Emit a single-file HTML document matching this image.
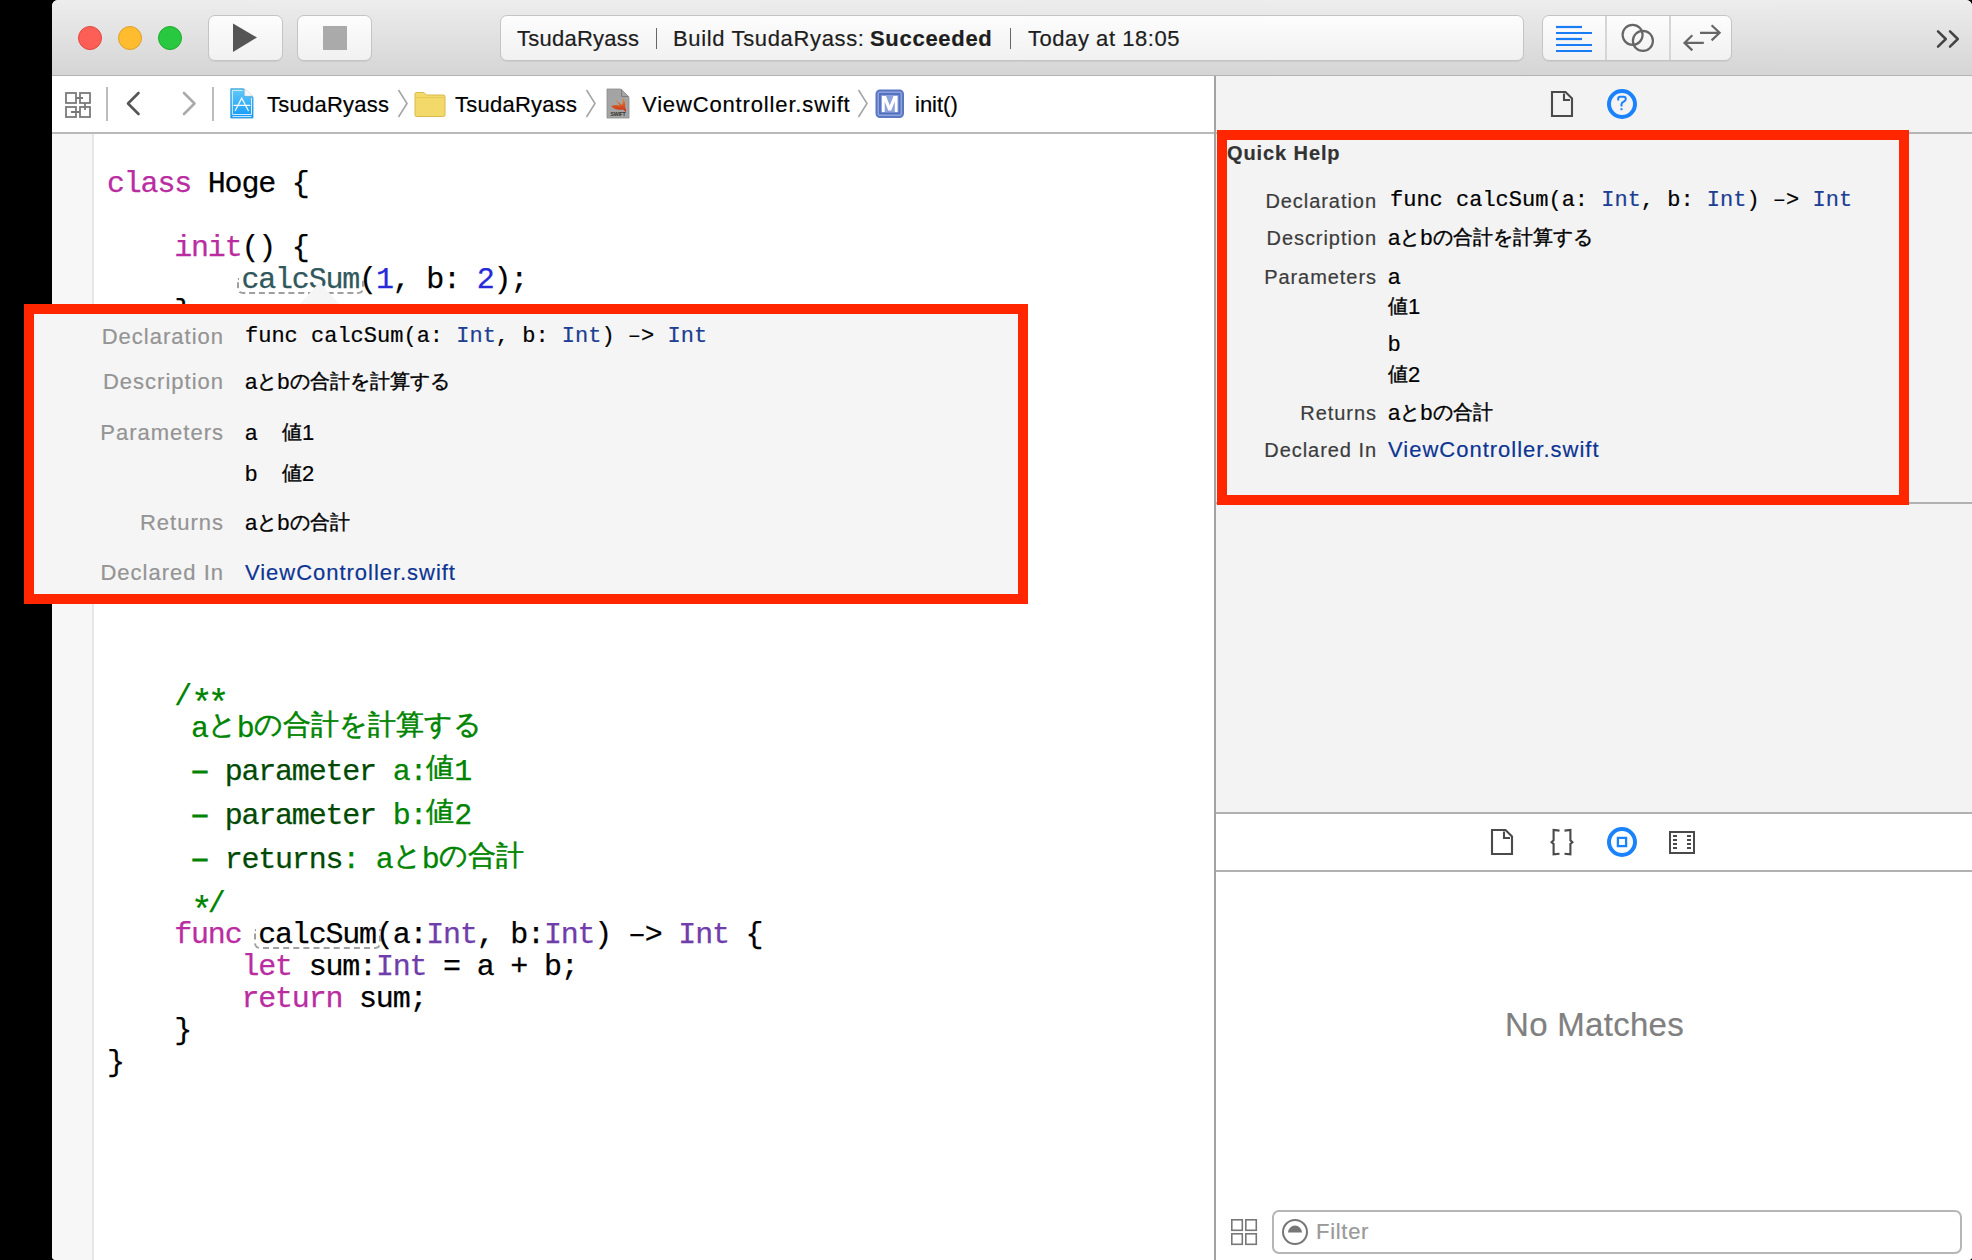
<!DOCTYPE html>
<html><head><meta charset="utf-8">
<style>
html,body{margin:0;padding:0;}
body{width:1972px;height:1260px;background:#000;position:relative;overflow:hidden;font-family:"Liberation Sans",sans-serif;}
.a{position:absolute;}
.t{position:absolute;white-space:pre;line-height:1;-webkit-text-stroke:0.2px currentColor;}
.m{font-family:"Liberation Mono",monospace;-webkit-text-stroke:0.2px currentColor;}
#win{left:52px;top:0;width:1920px;height:1260px;border-radius:6px 6px 4px 4px;overflow:hidden;background:#fff;}
#c{left:-52px;top:0;width:1972px;height:1260px;}
#title{left:52px;top:0;width:1920px;height:75px;background:linear-gradient(#ededed,#d5d5d5);border-bottom:1px solid #b3b3b3;}
.btn{background:linear-gradient(#fdfdfd,#f1f1f1);border:1px solid #c4c4c4;border-radius:7px;box-shadow:0 1px 0 rgba(0,0,0,0.06);box-sizing:border-box;}
.light{width:24px;height:24px;border-radius:50%;box-sizing:border-box;top:26px;}
#nav{left:52px;top:76px;width:1162px;height:56px;background:#fff;border-bottom:2px solid #b9b9b9;}
#gutter{left:52px;top:134px;width:40px;height:1126px;background:#f7f7f7;border-right:2px solid #e6e6e6;}
#divider{left:1214px;top:76px;width:2px;height:1184px;background:#a3a3a3;}
#insp{left:1216px;top:76px;width:756px;height:1184px;background:#f3f3f3;}
.code{font-family:"Liberation Mono",monospace;font-size:30px;letter-spacing:-1.2px;color:#000;-webkit-text-stroke:0.25px currentColor;}
.kw{color:#ba2da2;}
.num{color:#272ad8;}
.cm{color:#008400;}
.cmk{color:#024a04;}
.ty{color:#703daa;}
.pf{color:#31595d;}
.lbl{font-size:22px;color:#949494;}
.val{font-size:22px;color:#000;}
.link{color:#0d3593;}
.dt{color:#1c3f93;}
.ast{font-size:36px;letter-spacing:-4.8px;position:relative;top:10px;line-height:0;}
.jc{font-size:28px;letter-spacing:0;-webkit-text-stroke:0.5px currentColor;position:relative;top:-3px;}
.jp{font-size:20px;letter-spacing:0;-webkit-text-stroke:0.4px currentColor;position:relative;top:-1px;}
</style></head>
<body>
<div id="win" class="a"><div id="c" class="a">
  <div id="title" class="a"></div>
  <!-- traffic lights -->
  <div class="a light" style="left:78px;background:#fd5f57;border:1px solid #e1473f;"></div>
  <div class="a light" style="left:118px;background:#febc2e;border:1px solid #dea02a;"></div>
  <div class="a light" style="left:158px;background:#28c840;border:1px solid #1dac2c;"></div>
  <!-- play / stop -->
  <div class="a btn" style="left:208px;top:15px;width:75px;height:46px;"></div>
  <svg class="a" style="left:233px;top:23px" width="25" height="30"><polygon points="0,0.5 24,14.5 0,29" fill="#555"/></svg>
  <div class="a btn" style="left:297px;top:15px;width:75px;height:46px;"></div>
  <div class="a" style="left:323px;top:26px;width:24px;height:24px;background:#aaa;"></div>
  <!-- status -->
  <div class="a btn" style="left:500px;top:15px;width:1024px;height:46px;"></div>

  <!-- segmented -->
  <div class="a btn" style="left:1542px;top:15px;width:190px;height:46px;"></div>

  <!-- nav bar -->
  <div id="nav" class="a"></div>
  <div id="gutter" class="a"></div>
  <div id="divider" class="a"></div>
  <div id="insp" class="a"></div>

  <!-- code -->
  <div class="t code" style="left:107px;top:169px"><span class="kw">class</span> Hoge {</div>
  <div class="t code" style="left:107px;top:233px">    <span class="kw">init</span>() {</div>
  <div class="t code" style="left:107px;top:265px">        <span class="pf">calcSum</span>(<span class="num">1</span>, b: <span class="num">2</span>);</div>
  <div class="t code" style="left:107px;top:297px">    }</div>
  <div class="t code cm" style="left:107px;top:682px">    /<span class="ast">**</span></div>
  <div class="t code cm" style="left:107px;top:714px">     a<span class="jc">と</span>b<span class="jc">の合計を計算する</span></div>
  <div class="t code cm" style="left:107px;top:757px">     <span style="display:inline-block;transform:scaleX(0.8) translateY(-0.5px);-webkit-text-stroke:0.8px currentColor">—</span> <span class="cmk">parameter</span> a:<span class="jc">値</span>1</div>
  <div class="t code cm" style="left:107px;top:801px">     <span style="display:inline-block;transform:scaleX(0.8) translateY(-0.5px);-webkit-text-stroke:0.8px currentColor">—</span> <span class="cmk">parameter</span> b:<span class="jc">値</span>2</div>
  <div class="t code cm" style="left:107px;top:845px">     <span style="display:inline-block;transform:scaleX(0.8) translateY(-0.5px);-webkit-text-stroke:0.8px currentColor">—</span> <span class="cmk">returns</span>: a<span class="jc">と</span>b<span class="jc">の合計</span></div>
  <div class="t code cm" style="left:107px;top:889px">     <span class="ast">*</span>/</div>
  <div class="t code" style="left:107px;top:920px">    <span class="kw">func</span> calcSum(a:<span class="ty">Int</span>, b:<span class="ty">Int</span>) –&gt; <span class="ty">Int</span> {</div>
  <div class="t code" style="left:107px;top:952px">        <span class="kw">let</span> sum:<span class="ty">Int</span> = a + b;</div>
  <div class="t code" style="left:107px;top:984px">        <span class="kw">return</span> sum;</div>
  <div class="t code" style="left:107px;top:1016px">    }</div>
  <div class="t code" style="left:107px;top:1048px">}</div>

  <!-- toolbar status text -->
  <div class="t" style="left:517px;top:28px;font-size:22px;color:#1e1e1e;letter-spacing:0.25px">TsudaRyass</div>
  <div class="a" style="left:656px;top:28px;width:1px;height:21px;background:#666"></div>
  <div class="t" style="left:673px;top:28px;font-size:22px;color:#1e1e1e;letter-spacing:0.65px">Build TsudaRyass:</div>
  <div class="t" style="left:870px;top:28px;font-size:22px;color:#1e1e1e;font-weight:bold;letter-spacing:0.7px">Succeeded</div>
  <div class="a" style="left:1010px;top:28px;width:1px;height:21px;background:#666"></div>
  <div class="t" style="left:1028px;top:28px;font-size:22px;color:#1e1e1e;letter-spacing:0.55px">Today at 18:05</div>
  <!-- segmented icons -->
  <div class="a" style="left:1605px;top:16px;width:2px;height:44px;background:#d6d6d6"></div>
  <div class="a" style="left:1669px;top:16px;width:2px;height:44px;background:#d6d6d6"></div>
  <svg class="a" style="left:1540px;top:10px" width="200" height="50">
    <g stroke="#1a7cf6" stroke-width="2.2">
      <line x1="16" y1="17" x2="42" y2="17"/><line x1="16" y1="23" x2="52" y2="23"/><line x1="16" y1="29" x2="42" y2="29"/><line x1="16" y1="35" x2="52" y2="35"/><line x1="16" y1="41" x2="52" y2="41"/>
    </g>
    <g stroke="#666" stroke-width="2.2" fill="none">
      <circle cx="92.6" cy="24.8" r="10"/><circle cx="102.9" cy="30.9" r="10"/>
      <path d="M160 22.8 H179.6 M171.6 15.3 L179.6 22.8 L171.6 30.4"/>
      <path d="M163.8 32.9 H144.5 M152.3 25.3 L144.5 32.9 L152.3 40.4"/>
    </g>
  </svg>
  <svg class="a" style="left:1935px;top:28px" width="28" height="22"><path d="M3 3.3 L10.8 11 L3 18.7 M15 3.3 L22.8 11 L15 18.7" stroke="#444" stroke-width="2.5" fill="none" stroke-linecap="round" stroke-linejoin="round"/></svg>

  <!-- nav bar -->
  <svg class="a" style="left:64px;top:91px" width="28" height="28">
    <g stroke="#7a7a7a" stroke-width="1.8" fill="none">
      <rect x="2" y="2" width="10" height="10"/><rect x="16" y="2" width="10" height="10"/>
      <rect x="2" y="16" width="10" height="10"/><rect x="16" y="16" width="10" height="10"/>
      <path d="M12 7 H19 M21 12 V19 M7 21 H16"/>
    </g>
  </svg>
  <div class="a" style="left:106px;top:87px;width:2px;height:34px;background:#bdbdbd"></div>
  <svg class="a" style="left:122px;top:90px" width="80" height="28">
    <path d="M16.5 3 L6 13.5 L16.5 24" stroke="#555" stroke-width="2.6" fill="none" stroke-linecap="round" stroke-linejoin="round"/>
    <path d="M62 3 L72.5 13.5 L62 24" stroke="#aaa" stroke-width="2.6" fill="none" stroke-linecap="round" stroke-linejoin="round"/>
  </svg>
  <div class="a" style="left:212px;top:87px;width:2px;height:34px;background:#bdbdbd"></div>
  <!-- project icon -->
  <svg class="a" style="left:229px;top:87px" width="26" height="34">
    <defs><linearGradient id="pg" x1="0" y1="0" x2="0" y2="1"><stop offset="0" stop-color="#62c9f6"/><stop offset="1" stop-color="#139af9"/></linearGradient></defs>
    <path d="M1.8 1.8 H14 Q15.7 1.8 15.7 3.5 V9 H22 Q24 9 24 11 V31 H1.8 Z" fill="url(#pg)" stroke="#2a93d6" stroke-width="0.8"/>
    <path d="M15.7 1.8 L24 9 H15.7 Z" fill="#f7f9fb" stroke="#c9d3da" stroke-width="0.6"/>
    <path d="M3.4 27.5 V3.4 H13.5 M22.5 11 V27.5 H3.4 M3.4 29.6 H22.5" fill="none" stroke="#e6f5fe" stroke-width="0.9"/>
    <g stroke="#f2faff" stroke-width="1.3" fill="none" stroke-linecap="round"><path d="M6.3 23.5 L12.7 11.2 L19.3 23.5 M5.1 18.4 H20.8"/></g>
  </svg>
  <div class="t" style="left:267px;top:94px;font-size:22px;color:#000;letter-spacing:0.25px">TsudaRyass</div>
  <svg class="a" style="left:396px;top:89px" width="14" height="30"><path d="M2.5 1 L11 14.5 L2.5 28" stroke="#a5a5a5" stroke-width="1.6" fill="none"/></svg>
  <!-- folder -->
  <svg class="a" style="left:414px;top:91px" width="33" height="27">
    <path d="M1 3 Q1 1.5 2.5 1.5 H10 L12.5 4 H29.5 Q31 4 31 5.5 V24 Q31 25.5 29.5 25.5 H2.5 Q1 25.5 1 24 Z" fill="#f3d86a" stroke="#d8b94c" stroke-width="1"/>
    <path d="M1 6.5 H31" stroke="#e8c955" stroke-width="1"/>
  </svg>
  <div class="t" style="left:455px;top:94px;font-size:22px;color:#000;letter-spacing:0.25px">TsudaRyass</div>
  <svg class="a" style="left:584px;top:89px" width="14" height="30"><path d="M2.5 1 L11 14.5 L2.5 28" stroke="#a5a5a5" stroke-width="1.6" fill="none"/></svg>
  <!-- swift icon -->
  <svg class="a" style="left:605px;top:87px" width="26" height="34">
    <defs><linearGradient id="sg" x1="0" y1="0" x2="0" y2="1"><stop offset="0" stop-color="#e8902c"/><stop offset="1" stop-color="#c92a1c"/></linearGradient></defs>
    <path d="M2 2 H14.5 Q16 2 16.5 2.5 L23.5 9.5 Q24 10 24 11.5 V31 H2 Z" fill="#a4a4a4" stroke="#8a8a8a" stroke-width="0.8"/>
    <path d="M16.5 2.5 V9.5 H23.5" fill="none" stroke="#777" stroke-width="0.9"/>
    <path d="M6 19 Q11 24 18 22.5 Q20 24 21 25 Q21.5 22 20 20 Q21 15 17.5 10.5 Q18.5 15 17 18 Q13.5 15.5 9.5 12 Q13 16 15 18.5 Q11 17.5 6 19 Z" fill="url(#sg)"/>
    <text x="13" y="29.2" font-size="5.2" font-weight="bold" font-family="Liberation Sans" fill="#333" text-anchor="middle" letter-spacing="-0.2">SWIFT</text>
  </svg>
  <div class="t" style="left:642px;top:94px;font-size:22px;color:#000;letter-spacing:0.85px">ViewController.swift</div>
  <svg class="a" style="left:856px;top:89px" width="14" height="30"><path d="M2.5 1 L11 14.5 L2.5 28" stroke="#a5a5a5" stroke-width="1.6" fill="none"/></svg>
  <!-- M icon -->
  <svg class="a" style="left:875px;top:89px" width="30" height="30">
    <rect x="1.5" y="1.5" width="26.5" height="26.5" rx="3.5" fill="#8ea3db" stroke="#5a77c4" stroke-width="2"/>
    <rect x="5" y="5" width="19.5" height="19.5" fill="none" stroke="#4f6dbd" stroke-width="1.8"/>
    <path d="M7 23 V7 H11 L14.75 16.5 L18.5 7 H22.5 V23 H19.8 V12.5 L16.2 21.5 H13.3 L9.7 12.5 V23 Z" fill="#fff"/>
  </svg>
  <div class="t" style="left:915px;top:94px;font-size:22px;color:#000;">init()</div>

  <!-- inspector header icons -->
  <div class="a" style="left:1216px;top:132px;width:756px;height:2px;background:#b4b4b4"></div>
  <svg class="a" style="left:1549px;top:89px" width="26" height="30">
    <path d="M3 3 H16.5 L23 9.5 V27 H3 Z" fill="none" stroke="#4a4a4a" stroke-width="2.1" stroke-linejoin="miter"/>
    <path d="M15 4.5 V11 H21" fill="none" stroke="#4a4a4a" stroke-width="2.1"/>
  </svg>
  <svg class="a" style="left:1605px;top:87px" width="34" height="34">
    <circle cx="17" cy="17" r="13" fill="none" stroke="#1a82fb" stroke-width="4"/>
    <path d="M13.2 13.6 V11.5 Q13.2 9.7 15.2 9.7 H18.6 Q20.8 9.7 20.8 12 Q20.8 14 18.6 14.8 Q16.5 15.6 16.5 17.6 V19.5" fill="none" stroke="#1a82fb" stroke-width="2"/>
    <rect x="15.5" y="21.2" width="2" height="2" fill="#1a82fb"/>
  </svg>

  <!-- inspector content -->
  <div class="a" style="left:1216px;top:502px;width:756px;height:2px;background:#b1b1b1"></div>
  <div class="a" style="left:1216px;top:812px;width:756px;height:2px;background:#b1b1b1"></div>
  <div class="a" style="left:1216px;top:814px;width:756px;height:56px;background:#fff"></div>
  <div class="a" style="left:1216px;top:870px;width:756px;height:2px;background:#b1b1b1"></div>
  <div class="a" style="left:1216px;top:872px;width:756px;height:388px;background:#fff"></div>

  <div class="t" style="left:1227px;top:143px;font-size:20px;font-weight:bold;color:#333;letter-spacing:0.9px">Quick Help</div>
  <div class="t" style="left:1177px;width:200px;text-align:right;top:191px;font-size:20px;color:#3c3c3c;letter-spacing:0.95px">Declaration</div>
  <div class="t m" style="left:1390px;top:190px;font-size:22px;color:#000">func calcSum(a: <span class="dt">Int</span>, b: <span class="dt">Int</span>) –&gt; <span class="dt">Int</span></div>
  <div class="t" style="left:1177px;width:200px;text-align:right;top:228px;font-size:20px;color:#3c3c3c;letter-spacing:0.95px">Description</div>
  <div class="t" style="left:1388px;top:227px;font-size:22px;color:#000">a<span class="jp">と</span>b<span class="jp">の合計を計算する</span></div>
  <div class="t" style="left:1177px;width:200px;text-align:right;top:267px;font-size:20px;color:#3c3c3c;letter-spacing:0.95px">Parameters</div>
  <div class="t" style="left:1388px;top:266px;font-size:22px;color:#000">a</div>
  <div class="t" style="left:1388px;top:296px;font-size:22px;color:#000"><span class="jp">値</span>1</div>
  <div class="t" style="left:1388px;top:333px;font-size:22px;color:#000">b</div>
  <div class="t" style="left:1388px;top:364px;font-size:22px;color:#000"><span class="jp">値</span>2</div>
  <div class="t" style="left:1177px;width:200px;text-align:right;top:403px;font-size:20px;color:#3c3c3c;letter-spacing:0.95px">Returns</div>
  <div class="t" style="left:1388px;top:402px;font-size:22px;color:#000">a<span class="jp">と</span>b<span class="jp">の合計</span></div>
  <div class="t" style="left:1177px;width:200px;text-align:right;top:440px;font-size:20px;color:#3c3c3c;letter-spacing:0.95px">Declared In</div>
  <div class="t link" style="left:1388px;top:439px;font-size:22px;letter-spacing:1px">ViewController.swift</div>

  <!-- library bar icons -->
  <svg class="a" style="left:1489px;top:827px" width="26" height="30">
    <path d="M3 3 H16.5 L23 9.5 V27 H3 Z" fill="none" stroke="#4a4a4a" stroke-width="2.1"/>
    <path d="M15 4.5 V11 H21" fill="none" stroke="#4a4a4a" stroke-width="2.1"/>
  </svg>
  <svg class="a" style="left:1549px;top:827px" width="26" height="30">
    <path d="M10.5 3.6 L4.6 2.9 V13.4 L2.6 15.2 L4.6 17 V27.4 L10.5 26.8 M15.5 3.6 L21.4 2.9 V13.4 L23.4 15.2 L21.4 17 V27.4 L15.5 26.8" fill="none" stroke="#4a4a4a" stroke-width="2.1" stroke-linejoin="miter"/>
  </svg>
  <svg class="a" style="left:1605px;top:825px" width="34" height="34">
    <circle cx="17" cy="17" r="13" fill="none" stroke="#1a82fb" stroke-width="4"/>
    <rect x="12.9" y="12.9" width="8.2" height="8.2" fill="none" stroke="#1a82fb" stroke-width="2.3"/>
  </svg>
  <svg class="a" style="left:1667px;top:829px" width="30" height="27">
    <rect x="3" y="3" width="24" height="21" fill="none" stroke="#4a4a4a" stroke-width="2"/>
    <g stroke="#4a4a4a" stroke-width="1.8"><path d="M6 7 H10 M6 11 H10 M6 15 H10 M6 19 H10 M20 7 H24 M20 11 H24 M20 15 H24 M20 19 H24"/></g>
  </svg>

  <div class="t" style="left:1505px;top:1008px;font-size:33px;color:#808080;letter-spacing:0.3px">No Matches</div>
  <!-- filter -->
  <svg class="a" style="left:1229px;top:1217px" width="30" height="30">
    <g fill="none" stroke="#777" stroke-width="1.6"><rect x="2.8" y="2.8" width="10.5" height="10.5"/><rect x="16.8" y="2.8" width="10.5" height="10.5"/><rect x="2.8" y="16.8" width="10.5" height="10.5"/><rect x="16.8" y="16.8" width="10.5" height="10.5"/></g>
  </svg>
  <div class="a" style="left:1272px;top:1210px;width:690px;height:44px;box-sizing:border-box;border:2px solid #b6b6b6;border-radius:7px;background:#fff"></div>
  <svg class="a" style="left:1280px;top:1217px" width="30" height="30">
    <circle cx="15" cy="15" r="12" fill="none" stroke="#777" stroke-width="2"/>
    <path d="M8 15.6 A7 7 0 0 1 22 15.6 Z" fill="#777"/>
  </svg>
  <div class="t" style="left:1316px;top:1221px;font-size:22px;color:#999;letter-spacing:0.7px">Filter</div>

  <!-- dashed symbol boxes -->
  <div class="a" style="left:237px;top:278px;width:127px;height:16px;box-sizing:border-box;border:2px dashed #a0a0a0;border-top:none;border-radius:0 0 6px 6px"></div>
  <div class="a" style="left:254px;top:929px;width:127px;height:20px;box-sizing:border-box;border:2px dashed #a0a0a0;border-top:none;border-radius:0 0 6px 6px"></div>

</div></div>
  <!-- popup -->
  <svg class="a" style="left:295px;top:279px" width="50" height="30"><polygon points="4,26 24.6,3 45,26" fill="#f5f5f5"/></svg>
  <div class="a" style="left:24px;top:304px;width:1004px;height:300px;box-sizing:border-box;border:10px solid #ff2600;background:#f5f5f5"></div>
  <div class="t lbl" style="left:24px;width:200px;text-align:right;top:326px;letter-spacing:1px">Declaration</div>
  <div class="t m" style="left:245px;top:326px;font-size:22px;color:#000">func calcSum(a: <span class="dt">Int</span>, b: <span class="dt">Int</span>) –&gt; <span class="dt">Int</span></div>
  <div class="t lbl" style="left:24px;width:200px;text-align:right;top:371px;letter-spacing:1px">Description</div>
  <div class="t val" style="left:245px;top:371px">a<span class="jp">と</span>b<span class="jp">の合計を計算する</span></div>
  <div class="t lbl" style="left:24px;width:200px;text-align:right;top:422px;letter-spacing:1px">Parameters</div>
  <div class="t val" style="left:245px;top:422px">a</div>
  <div class="t val" style="left:282px;top:422px"><span class="jp">値</span>1</div>
  <div class="t val" style="left:245px;top:463px">b</div>
  <div class="t val" style="left:282px;top:463px"><span class="jp">値</span>2</div>
  <div class="t lbl" style="left:24px;width:200px;text-align:right;top:512px;letter-spacing:1px">Returns</div>
  <div class="t val" style="left:245px;top:512px">a<span class="jp">と</span>b<span class="jp">の合計</span></div>
  <div class="t lbl" style="left:24px;width:200px;text-align:right;top:562px;letter-spacing:1px">Declared In</div>
  <div class="t val link" style="left:245px;top:562px;letter-spacing:0.97px">ViewController.swift</div>

  <!-- quick help red box -->
  <div class="a" style="left:1217px;top:130px;width:692px;height:375px;box-sizing:border-box;border:10px solid #ff2600;"></div>
</body></html>
